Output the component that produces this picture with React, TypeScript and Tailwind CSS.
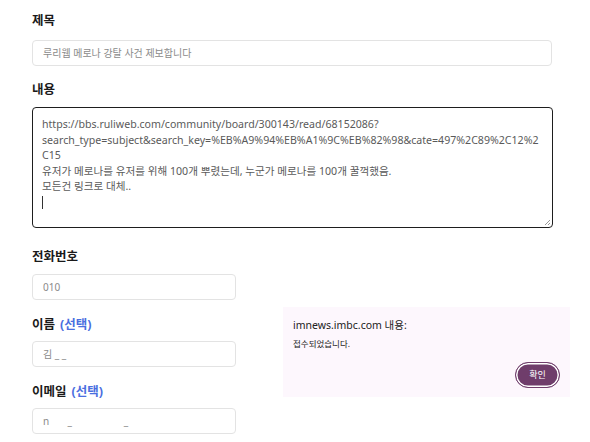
const font = { fontFamily: '"Noto Sans", "Noto Sans CJK KR", sans-serif' }

function Label({ text, optional }: { text: string; optional?: boolean }) {
  return (
    <div className="h-[18px] text-[12.5px] font-bold leading-[18px] text-[#1a1a1a]">
      {text}
      {optional && <span className="ml-[5px] text-[#4a6ee0]">(선택)</span>}
    </div>
  )
}

function Field({ value, wide }: { value: string; wide?: boolean }) {
  return (
    <div
      className={`flex h-[26px] items-center whitespace-pre rounded-[4px] border border-[#e3e3e3] bg-white px-[10px] text-[10px] text-[#8a8a8a] ${
        wide ? "w-[520px]" : "w-[204px]"
      }`}
    >
      {value}
    </div>
  )
}

export default function App() {
  const lines = [
    "https://bbs.ruliweb.com/community/board/300143/read/68152086?",
    "search_type=subject&search_key=%EB%A9%94%EB%A1%9C%EB%82%98&cate=497%2C89%2C12%2",
    "C15",
    "유저가 메로나를 유저를 위해 100개 뿌렸는데, 누군가 메로나를 100개 꿀꺽했음.",
    "모든건 링크로 대체..",
  ]

  return (
    <div className="relative h-[442px] w-[590px] overflow-hidden bg-white" style={font}>
      <div className="px-[32px] pt-[12px]">
        <Label text="제목" />
        <div className="mt-[10px]">
          <Field value="루리웹 메로나 강탈 사건 제보합니다" wide />
        </div>

        <div className="mt-[15px]">
          <Label text="내용" />
        </div>
        <div className="relative mt-[8px] h-[121px] w-[521px] rounded-[4px] border-[1.5px] border-[#1e1e1e] bg-white px-[9px] pt-[9px] text-[10.6px] leading-[15.5px] text-[#5a5a5a]">
          {lines.map((l) => (
            <div key={l} className="whitespace-nowrap">
              {l}
            </div>
          ))}
          <div className="mt-[1px] h-[13px] w-px bg-[#333]" />
          <svg className="absolute bottom-[1px] right-[1px]" width="7" height="7" viewBox="0 0 7 7">
            <path d="M6 1 L1 6 M6 4 L4 6" stroke="#999" strokeWidth="1" />
          </svg>
        </div>

        <div className="mt-[20px]">
          <Label text="전화번호" />
        </div>
        <div className="mt-[8px]">
          <Field value="010" />
        </div>

        <div className="mt-[16px]">
          <Label text="이름" optional />
        </div>
        <div className="mt-[7px]">
          <Field value="김 _ _" />
        </div>

        <div className="mt-[16px]">
          <Label text="이메일" optional />
        </div>
        <div className="mt-[7px]">
          <Field value={"n       _                    _"} />
        </div>
      </div>

      {/* browser alert */}
      <div className="absolute left-[283px] top-[307px] h-[90px] w-[287px] bg-[#fdf7fd]">
        <div className="pl-[10px] pt-[11px] text-[10.5px] leading-[14px] text-[#222]">imnews.imbc.com 내용:</div>
        <div className="pl-[10px] pt-[6px] text-[8.5px] leading-[11px] text-[#222]">접수되었습니다.</div>
        <div className="absolute left-[232px] top-[55px] flex h-[26px] w-[45px] items-center justify-center rounded-full border border-[#6f3d6b] bg-[#6f3d6b] shadow-[inset_0_0_0_1.5px_#fff]">
          <span className="text-[9px] text-white">확인</span>
        </div>
      </div>
    </div>
  )
}
